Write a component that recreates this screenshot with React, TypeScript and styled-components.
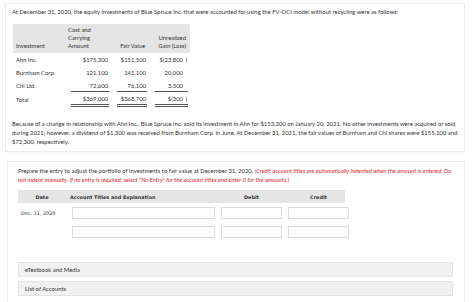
import React from 'react';
import styled, {createGlobalStyle} from 'styled-components';

const GlobalStyle = createGlobalStyle`
    html, body {
        margin: 0;
        padding: 0;
        background: #ffffff;
    }
    body {
        font-family: Lato, "Open Sans", sans-serif;
        color: #333333;
    }
`;

const Page = styled.div`
    display: flex;
    flex-direction: column;
    gap: 9px;
    padding: 3px 0 0 0;
    width: 474px;
    height: 302px;
    box-sizing: border-box;
    overflow: hidden;
`;

const Card = styled.section<{$left: number}>`
    margin-left: ${({$left}) => $left}px;
    width: ${({$left}) => 465 - $left}px;
    box-sizing: border-box;
    border: 1px solid #ececec;
    background: #ffffff;
    box-shadow: 0 1px 2px rgba(0, 0, 0, 0.04);
`;

const QuestionCard = styled(Card)`
    padding: 3px 4px 5px 6px;
`;

const EntryCard = styled(Card)`
    padding: 4px 11px 6px 10px;
`;

const Text = styled.p`
    margin: 0;
    font-size: 5.9px;
    line-height: 9px;
    color: #333333;
`;

const Instructions = styled(Text)`
    margin-top: 0;
`;

const Warning = styled.em`
    color: #d8232a;
`;

const Holdings = styled.table`
    margin: 8px 0 0 1px;
    border-collapse: collapse;
    table-layout: fixed;
    width: 177px;
    font-size: 5.9px;
    line-height: 8px;
`;

const HeadRow = styled.tr`
    background: #e5e5e5;
`;

const HeadCell = styled.th<{$align?: 'left' | 'right'}>`
    font-weight: normal;
    text-align: ${({$align}) => $align ?? 'right'};
    vertical-align: bottom;
    padding: 2px 4px 3px 3px;
    color: #333333;
`;

const Row = styled.tr`
    height: 13.4px;
`;

const NameCell = styled.td`
    padding: 0 0 0 3px;
    vertical-align: middle;
`;

const AmountCell = styled.td`
    padding: 0 0 0 6px;
    vertical-align: middle;
`;

const Amount = styled.div<{$rule?: 'single' | 'double'}>`
    display: flex;
    justify-content: flex-end;
    line-height: 11px;
    padding-right: 1px;
    border-bottom: ${({$rule}) =>
        $rule === 'single' ? '1px solid #555' : $rule === 'double' ? '3px double #555' : '1px solid transparent'};
    margin-right: 2px;
`;

const Tail = styled.span`
    display: inline-block;
    width: 4px;
    text-align: right;
`;

const Paragraph = styled(Text)`
    margin-top: 12px;
`;

const Journal = styled.div`
    margin-top: 6px;
    font-family: "DejaVu Sans", Verdana, sans-serif;
    font-size: 4.9px;
    color: #333333;
`;

const columns = '48px 143px 61px 61px';

const JournalHead = styled.div`
    display: grid;
    grid-template-columns: ${columns};
    column-gap: 6px;
    width: 327px;
    height: 13px;
    align-items: center;
    background: #e5e5e5;
    font-weight: bold;
`;

const HeadLabel = styled.span<{$align: 'left' | 'center'}>`
    text-align: ${({$align}) => $align};
    margin-left: ${({$align}) => ($align === 'left' ? '-2px' : '0')};
`;

const JournalRow = styled.div`
    display: grid;
    grid-template-columns: ${columns};
    column-gap: 6px;
    align-items: center;
    margin-top: ${() => '4px'};
    & + & {
        margin-top: 7px;
    }
`;

const DateLabel = styled.span`
    padding-left: 3px;
`;

const Field = styled.div`
    height: 12px;
    box-sizing: border-box;
    border: 1px solid #dcdcdc;
    background: #ffffff;
`;

const Drawers = styled.div`
    display: flex;
    flex-direction: column;
    gap: 4px;
    margin-top: 24px;
`;

const Drawer = styled.div`
    height: 15px;
    box-sizing: border-box;
    display: flex;
    align-items: center;
    padding-left: 6px;
    border: 1px solid #e4e4e4;
    background: #f1f1f1;
    font-size: 5.9px;
    color: #333333;
`;

type Holding = {
    name: string;
    cost: string;
    fair: string;
    gain: string;
    negative?: boolean;
    rule?: 'single' | 'double';
};

const holdings: Holding[] = [
    {name: 'Ahn Inc.', cost: '$175,300', fair: '$151,500', gain: '$(23,800', negative: true},
    {name: 'Burnham Corp.', cost: '121,100', fair: '141,100', gain: '20,000'},
    {name: 'Chi Ltd.', cost: '72,600', fair: '76,100', gain: '3,500', rule: 'single'},
    {name: 'Total', cost: '$369,000', fair: '$368,700', gain: '$(300', negative: true, rule: 'double'},
];

export default function App() {
    return (
        <>
            <GlobalStyle />
            <Page>
                <QuestionCard $left={5}>
                    <Text>
                        At December 31, 2020, the equity investments of Blue Spruce Inc. that were accounted for
                        using the FV-OCI model without recycling were as follows:
                    </Text>
                    <Holdings>
                        <colgroup>
                            <col style={{width: 52}} />
                            <col style={{width: 46}} />
                            <col style={{width: 38}} />
                            <col style={{width: 41}} />
                        </colgroup>
                        <thead>
                            <HeadRow>
                                <HeadCell $align="left">Investment</HeadCell>
                                <HeadCell $align="left">
                                    Cost and
                                    <br />
                                    Carrying
                                    <br />
                                    Amount
                                </HeadCell>
                                <HeadCell>Fair Value</HeadCell>
                                <HeadCell>
                                    Unrealized
                                    <br />
                                    Gain (Loss)
                                </HeadCell>
                            </HeadRow>
                        </thead>
                        <tbody>
                            {holdings.map(h => (
                                <Row key={h.name}>
                                    <NameCell>{h.name}</NameCell>
                                    <AmountCell>
                                        <Amount $rule={h.rule}>{h.cost}</Amount>
                                    </AmountCell>
                                    <AmountCell>
                                        <Amount $rule={h.rule}>{h.fair}</Amount>
                                    </AmountCell>
                                    <AmountCell>
                                        <Amount $rule={h.rule}>
                                            {h.gain}
                                            <Tail>{h.negative ? ')' : ''}</Tail>
                                        </Amount>
                                    </AmountCell>
                                </Row>
                            ))}
                        </tbody>
                    </Holdings>
                    <Paragraph>
                        Because of a change in relationship with Ahn Inc., Blue Spruce Inc. sold its investment in Ahn
                        for $153,200 on January 20, 2021. No other investments were acquired or sold during 2021;
                        however, a dividend of $1,300 was received from Burnham Corp. in June. At December 31, 2021,
                        the fair values of Burnham and Chi shares were $155,100 and $72,300, respectively.
                    </Paragraph>
                </QuestionCard>
                <EntryCard $left={7}>
                    <Instructions>
                        Prepare the entry to adjust the portfolio of investments to fair value at December 31, 2020.{' '}
                        <Warning>
                            (Credit account titles are automatically indented when the amount is entered. Do not
                            indent manually. If no entry is required, select "No Entry" for the account titles and
                            enter 0 for the amounts.)
                        </Warning>
                    </Instructions>
                    <Journal>
                        <JournalHead>
                            <HeadLabel $align="center">Date</HeadLabel>
                            <HeadLabel $align="left">Account Titles and Explanation</HeadLabel>
                            <HeadLabel $align="center">Debit</HeadLabel>
                            <HeadLabel $align="center">Credit</HeadLabel>
                        </JournalHead>
                        <JournalRow>
                            <DateLabel>Dec. 31, 2020</DateLabel>
                            <Field />
                            <Field />
                            <Field />
                        </JournalRow>
                        <JournalRow>
                            <span />
                            <Field />
                            <Field />
                            <Field />
                        </JournalRow>
                    </Journal>
                    <Drawers>
                        <Drawer>eTextbook and Media</Drawer>
                        <Drawer>List of Accounts</Drawer>
                    </Drawers>
                </EntryCard>
            </Page>
        </>
    );
}
